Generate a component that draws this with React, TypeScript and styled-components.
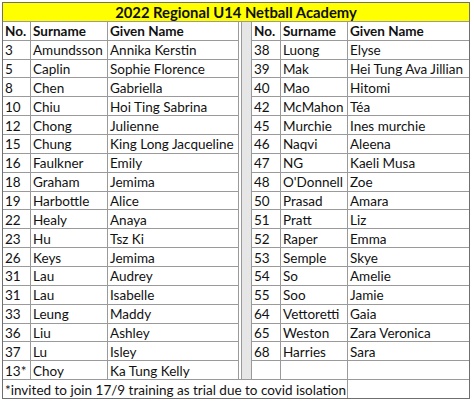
import React from "react";
import styled, { createGlobalStyle } from "styled-components";

const GlobalStyle = createGlobalStyle`
  html, body {
    margin: 0;
    padding: 0;
    background: #ffffff;
  }
  body {
    font-family: Lato, "Open Sans", sans-serif;
    color: #111;
  }
`;

const Page = styled.div`
  padding: 2px 0 0 2px;
`;

const Sheet = styled.div`
  display: grid;
  grid-template-columns: 27px 76px 130px 2px 9px 28px 66px 121px;
  grid-template-rows: repeat(21, 1fr);
  gap: 1px;
  width: 468px;
  height: 397px;
  box-sizing: border-box;
  border: 1px solid #6f6f6f;
  background: #9a9a9a;
`;

const Cell = styled.div<{ $bold?: boolean }>`
  background: #ffffff;
  display: flex;
  align-items: center;
  padding: 1px 0 0 2px;
  font-size: 13.5px;
  font-weight: ${(p) => (p.$bold ? 700 : 400)};
  white-space: nowrap;
  overflow: hidden;
`;

const Title = styled(Cell)`
  grid-column: 1 / -1;
  justify-content: center;
  background: #ffff00;
  font-size: 14.8px;
  font-weight: 700;
  padding: 0;
`;

const Spacer = styled.div<{ $col: number; $shade?: boolean }>`
  grid-column: ${(p) => p.$col};
  grid-row: 2 / span 19;
  background: ${(p) => (p.$shade ? "#e6e6e6" : "#ffffff")};
`;

const Note = styled(Cell)`
  grid-column: 1 / span 7;
`;

type Row = [string, string, string];

const left: Row[] = [
  ["3", "Amundsson", "Annika Kerstin"],
  ["5", "Caplin", "Sophie Florence"],
  ["8", "Chen", "Gabriella"],
  ["10", "Chiu", "Hoi Ting Sabrina"],
  ["12", "Chong", "Julienne"],
  ["15", "Chung", "King Long Jacqueline"],
  ["16", "Faulkner", "Emily"],
  ["18", "Graham", "Jemima"],
  ["19", "Harbottle", "Alice"],
  ["22", "Healy", "Anaya"],
  ["23", "Hu", "Tsz Ki"],
  ["26", "Keys", "Jemima"],
  ["31", "Lau", "Audrey"],
  ["31", "Lau", "Isabelle"],
  ["33", "Leung", "Maddy"],
  ["36", "Liu", "Ashley"],
  ["37", "Lu", "Isley"],
  ["13*", "Choy", "Ka Tung Kelly"],
];

const right: Row[] = [
  ["38", "Luong", "Elyse"],
  ["39", "Mak", "Hei Tung Ava Jillian"],
  ["40", "Mao", "Hitomi"],
  ["42", "McMahon", "Téa"],
  ["45", "Murchie", "Ines murchie"],
  ["46", "Naqvi", "Aleena"],
  ["47", "NG", "Kaeli Musa"],
  ["48", "O'Donnell", "Zoe"],
  ["50", "Prasad", "Amara"],
  ["51", "Pratt", "Liz"],
  ["52", "Raper", "Emma"],
  ["53", "Semple", "Skye"],
  ["54", "So", "Amelie"],
  ["55", "Soo", "Jamie"],
  ["64", "Vettoretti", "Gaia"],
  ["65", "Weston", "Zara Veronica"],
  ["68", "Harries", "Sara"],
  ["", "", ""],
];

const heads = ["No.", "Surname", "Given Name"];

export default function App() {
  return (
    <Page>
      <GlobalStyle />
      <Sheet>
        <Title>2022 Regional U14 Netball Academy</Title>
        <Spacer $col={4} />
        <Spacer $col={5} $shade />
        {heads.map((h) => (
          <Cell key={"l" + h} $bold>
            {h}
          </Cell>
        ))}
        {heads.map((h) => (
          <Cell key={"r" + h} $bold>
            {h}
          </Cell>
        ))}
        {left.map((row, i) => (
          <React.Fragment key={i}>
            {row.map((v, j) => (
              <Cell key={"l" + j}>{v}</Cell>
            ))}
            {right[i].map((v, j) => (
              <Cell key={"r" + j}>{v}</Cell>
            ))}
          </React.Fragment>
        ))}
        <Note>*invited to join 17/9 training as trial due to covid isolation</Note>
        <Cell />
      </Sheet>
    </Page>
  );
}
